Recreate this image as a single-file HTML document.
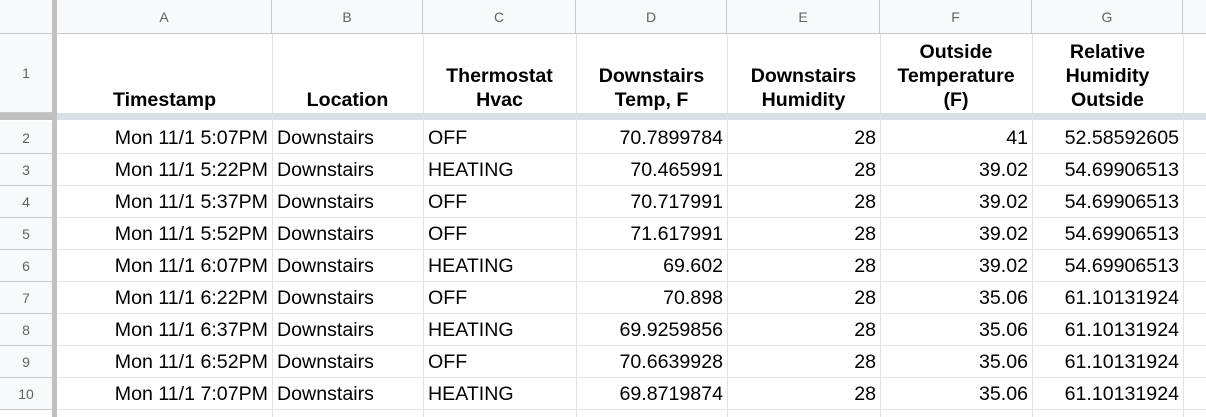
<!DOCTYPE html><html><head><style>
body{margin:0;width:1206px;height:417px;overflow:hidden;background:#fff;font-family:"Liberation Sans",Arial,sans-serif;position:relative}
div{position:absolute;box-sizing:border-box}
.h{top:0;height:34px;background:#f8f9fa;color:#5f6368;font-size:14px;text-align:center;line-height:34px;border-right:1px solid #c4c7c5;border-bottom:1px solid #c4c7c5}
.r{left:0;width:52px;background:#f8f9fa;color:#5f6368;font-size:14px;text-align:center;border-bottom:1px solid #c4c7c5}
.vl{top:34px;height:383px;width:1px;background:#e2e2e2}
.hl{left:57px;right:0;height:1px;background:#e2e2e2}
.c{font-size:19.6px;color:#000;height:32px;line-height:33px;white-space:nowrap;padding:0 4px 0 5px}
.b{font-weight:bold;font-size:19.6px;text-align:center;line-height:24px;bottom:0;white-space:nowrap}
</style></head><body>
<div style="left:0;top:0;width:52px;height:34px;background:#f8f9fa;border-bottom:1px solid #c4c7c5"></div>
<div style="left:52px;top:0;width:5px;height:417px;background:#c0c0c0"></div>
<div style="left:0;top:113px;width:57px;height:7px;background:#c0c0c0"></div>
<div style="left:57px;top:113px;width:1149px;height:7px;background:#dadfe8"></div>
<div class="h" style="left:57px;width:215px">A</div>
<div class="h" style="left:272px;width:151px">B</div>
<div class="h" style="left:423px;width:153px">C</div>
<div class="h" style="left:576px;width:151px">D</div>
<div class="h" style="left:727px;width:153px">E</div>
<div class="h" style="left:880px;width:152px">F</div>
<div class="h" style="left:1032px;width:151px">G</div>
<div class="h" style="left:1183px;width:30px"></div>
<div class="vl" style="left:272px"></div><div class="vl" style="left:423px"></div><div class="vl" style="left:576px"></div><div class="vl" style="left:727px"></div><div class="vl" style="left:880px"></div><div class="vl" style="left:1032px"></div><div class="vl" style="left:1183px"></div>
<div class="r" style="top:34px;height:79px;line-height:79px">1</div>
<div class="b" style="left:57px;width:215px;top:88px;height:24px">Timestamp</div>
<div class="b" style="left:272px;width:151px;top:88px;height:24px">Location</div>
<div class="b" style="left:423px;width:153px;top:64px;height:48px">Thermostat<br>Hvac</div>
<div class="b" style="left:576px;width:151px;top:64px;height:48px">Downstairs<br>Temp, F</div>
<div class="b" style="left:727px;width:153px;top:64px;height:48px">Downstairs<br>Humidity</div>
<div class="b" style="left:880px;width:152px;top:40px;height:72px">Outside<br>Temperature<br>(F)</div>
<div class="b" style="left:1032px;width:151px;top:40px;height:72px">Relative<br>Humidity<br>Outside</div>
<div id="rows"></div>
<script>
var d=[["5:07PM","OFF","70.7899784","41","52.58592605"],["5:22PM","HEATING","70.465991","39.02","54.69906513"],["5:37PM","OFF","70.717991","39.02","54.69906513"],["5:52PM","OFF","71.617991","39.02","54.69906513"],["6:07PM","HEATING","69.602","39.02","54.69906513"],["6:22PM","OFF","70.898","35.06","61.10131924"],["6:37PM","HEATING","69.9259856","35.06","61.10131924"],["6:52PM","OFF","70.6639928","35.06","61.10131924"],["7:07PM","HEATING","69.8719874","35.06","61.10131924"]];
var h="";
d.forEach(function(r,i){var t=122+i*32;
h+='<div class="r" style="top:'+t+'px;height:32px;line-height:32px">'+(i+2)+'</div>';
h+='<div class="hl" style="top:'+(t+31)+'px"></div>';
function c(l,w,a,s){h+='<div class="c" style="left:'+l+'px;width:'+w+'px;top:'+t+'px;text-align:'+a+'">'+s+'</div>';}
c(57,215,"right","Mon 11/1 "+r[0]);c(272,151,"left","Downstairs");c(423,153,"left",r[1]);c(576,151,"right",r[2]);c(727,153,"right","28");c(880,152,"right",r[3]);c(1032,151,"right",r[4]);});
document.getElementById("rows").outerHTML=h;
</script>
</body></html>
